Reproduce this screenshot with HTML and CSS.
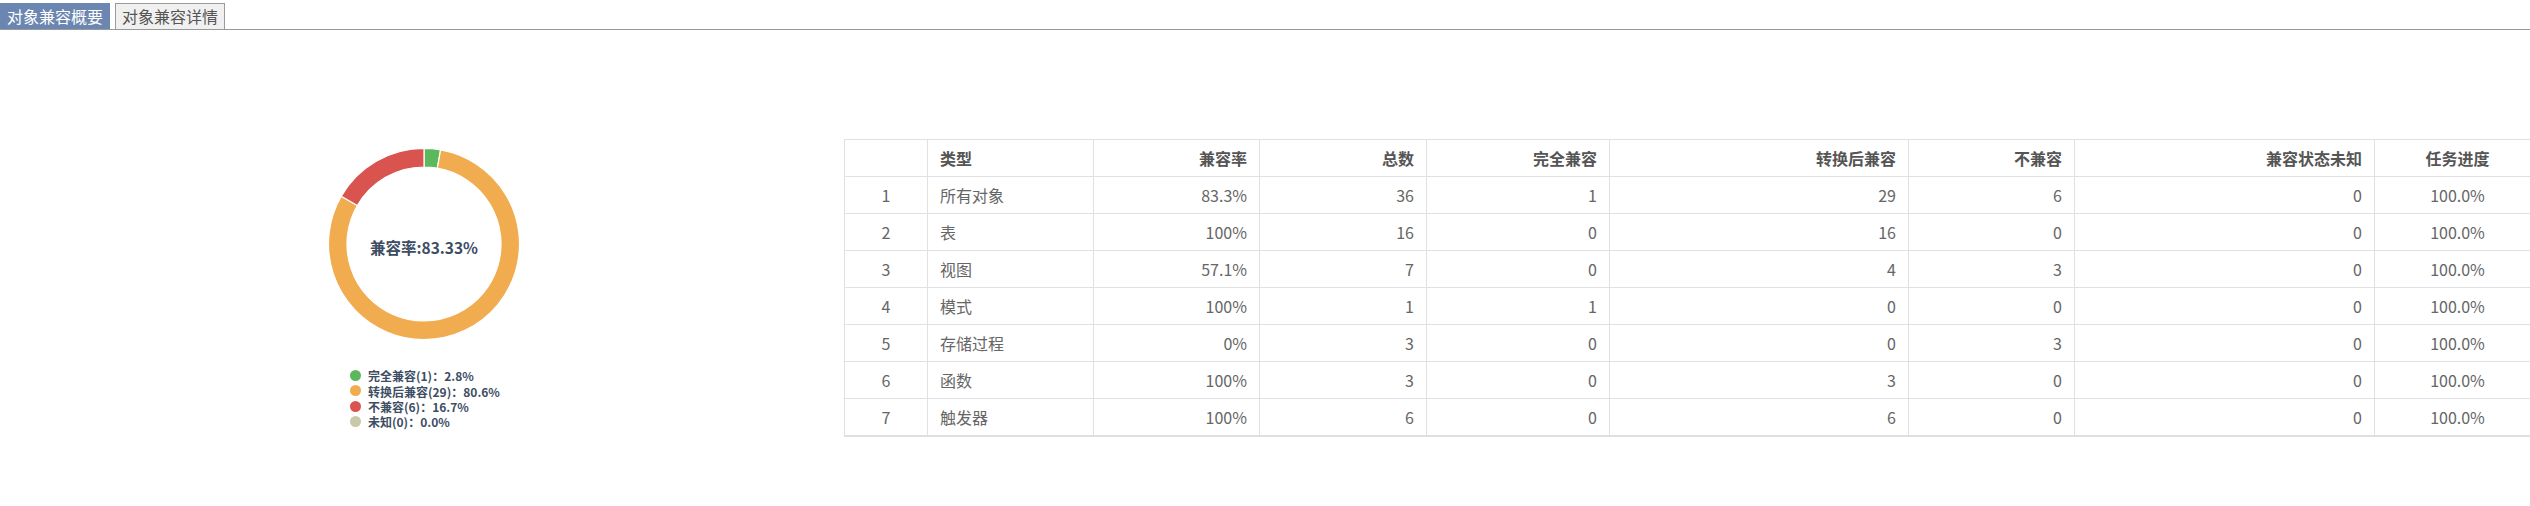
FILE: index.html
```html
<!DOCTYPE html>
<html lang="zh-CN">
<head>
<meta charset="utf-8">
<title>对象兼容概要</title>
<link rel="stylesheet" href="styles.css">
</head>
<body>
<div class="tabs">
  <div class="tab tab-active">对象兼容概要</div>
  <div class="tab">对象兼容详情</div>
</div>
<div class="content">
  <div class="chart-panel">
    <svg class="donut" width="192" height="192" viewBox="0 0 192 192">
      <path class="seg" fill="#5cb85c" d="M96 0.5 A95.5 95.5 0 0 1 112.58 1.95 L109.37 20.17 A77 77 0 0 0 96 19 Z"/>
      <path class="seg" fill="#f0ac4e" d="M112.58 1.95 A95.5 95.5 0 1 1 13.3 48.25 L29.32 57.5 A77 77 0 1 0 109.37 20.17 Z"/>
      <path class="seg" fill="#d9534f" d="M13.3 48.25 A95.5 95.5 0 0 1 96 0.5 L96 19 A77 77 0 0 0 29.32 57.5 Z"/>
      <text class="donut-label" x="96" y="99" text-anchor="middle" dominant-baseline="central">兼容率:83.33%</text>
    </svg>
    <ul class="legend">
      <li><span class="dot dot-green"></span>完全兼容(1)：2.8%</li>
      <li><span class="dot dot-orange"></span>转换后兼容(29)：80.6%</li>
      <li><span class="dot dot-red"></span>不兼容(6)：16.7%</li>
      <li><span class="dot dot-grey"></span>未知(0)：0.0%</li>
    </ul>
  </div>
  <table class="grid">
    <colgroup>
      <col class="c1"><col class="c2"><col class="c3"><col class="c4"><col class="c5"><col class="c6"><col class="c7"><col class="c8"><col class="c9">
    </colgroup>
    <thead>
      <tr>
        <th></th><th class="left">类型</th><th>兼容率</th><th>总数</th><th>完全兼容</th><th>转换后兼容</th><th>不兼容</th><th>兼容状态未知</th><th class="center">任务进度</th>
      </tr>
    </thead>
    <tbody>
      <tr><td class="center">1</td><td class="left">所有对象</td><td>83.3%</td><td>36</td><td>1</td><td>29</td><td>6</td><td>0</td><td class="center">100.0%</td></tr>
      <tr><td class="center">2</td><td class="left">表</td><td>100%</td><td>16</td><td>0</td><td>16</td><td>0</td><td>0</td><td class="center">100.0%</td></tr>
      <tr><td class="center">3</td><td class="left">视图</td><td>57.1%</td><td>7</td><td>0</td><td>4</td><td>3</td><td>0</td><td class="center">100.0%</td></tr>
      <tr><td class="center">4</td><td class="left">模式</td><td>100%</td><td>1</td><td>1</td><td>0</td><td>0</td><td>0</td><td class="center">100.0%</td></tr>
      <tr><td class="center">5</td><td class="left">存储过程</td><td>0%</td><td>3</td><td>0</td><td>0</td><td>3</td><td>0</td><td class="center">100.0%</td></tr>
      <tr><td class="center">6</td><td class="left">函数</td><td>100%</td><td>3</td><td>0</td><td>3</td><td>0</td><td>0</td><td class="center">100.0%</td></tr>
      <tr><td class="center">7</td><td class="left">触发器</td><td>100%</td><td>6</td><td>0</td><td>6</td><td>0</td><td>0</td><td class="center">100.0%</td></tr>
    </tbody>
  </table>
</div>
</body>
</html>
```
FILE: styles.css
```css
html, body {
  margin: 0;
  padding: 0;
  background: #ffffff;
}
body {
  width: 2530px;
  height: 506px;
  overflow: hidden;
  font-family: "Noto Sans CJK SC", "Noto Sans", sans-serif;
  font-size: 16px;
  color: #666666;
}
.tabs {
  display: flex;
  align-items: flex-end;
  gap: 5px;
  padding-top: 3px;
  border-bottom: 1px solid #999999;
}
.tab {
  box-sizing: border-box;
  height: 26px;
  line-height: 24px;
  padding: 0 6px;
  background: #f0f0f0;
  border: 1px solid #9a9a9a;
  border-bottom: none;
  color: #555555;
  font-size: 16px;
}
.tab-active {
  background: #6b86b1;
  border-color: #6b86b1;
  color: #ffffff;
}
.content {
  display: flex;
  align-items: flex-start;
  padding-top: 109px;
}
.chart-panel {
  flex: none;
  width: 844px;
  padding-top: 9px;
}
.donut {
  display: block;
  margin-left: 328px;
}
.seg {
  stroke: #ffffff;
  stroke-width: 1.2;
}
.donut-label {
  font-family: "Noto Sans CJK SC", "Noto Sans", sans-serif;
  font-size: 15.5px;
  font-weight: bold;
  fill: #3d4d63;
}
.legend {
  list-style: none;
  margin: 28px 0 0 350px;
  padding: 0;
}
.legend li {
  display: flex;
  align-items: center;
  gap: 7px;
  height: 15.33px;
  font-size: 12px;
  font-weight: bold;
  color: #3d4d63;
  white-space: nowrap;
}
.dot {
  display: inline-block;
  width: 11px;
  height: 11px;
  border-radius: 50%;
}
.dot-green { background: #5cb85c; }
.dot-orange { background: #f0ac4e; }
.dot-red { background: #d9534f; }
.dot-grey { background: #c8c8aa; }
.grid {
  flex: none;
  border-collapse: collapse;
  table-layout: fixed;
  width: 1696px;
  border: 1px solid #dfe1e6;
  border-bottom: 2px solid #dcdfe3;
  border-right: none;
}
.c1 { width: 83px; }
.c2 { width: 166px; }
.c3 { width: 166px; }
.c4 { width: 167px; }
.c5 { width: 183px; }
.c6 { width: 299px; }
.c7 { width: 166px; }
.c8 { width: 300px; }
.c9 { width: 166px; }
.grid th,
.grid td {
  border: 1px solid #dfe1e6;
  padding: 7px 12px;
  line-height: 22px;
  text-align: right;
  white-space: nowrap;
}
.grid th {
  font-weight: bold;
  color: #555555;
}
.grid td {
  color: #666666;
}
.grid tbody tr:last-child td {
  border-bottom: 2px solid #dcdfe3;
}
.grid .left { text-align: left; }
.grid .center { text-align: center; }
```
